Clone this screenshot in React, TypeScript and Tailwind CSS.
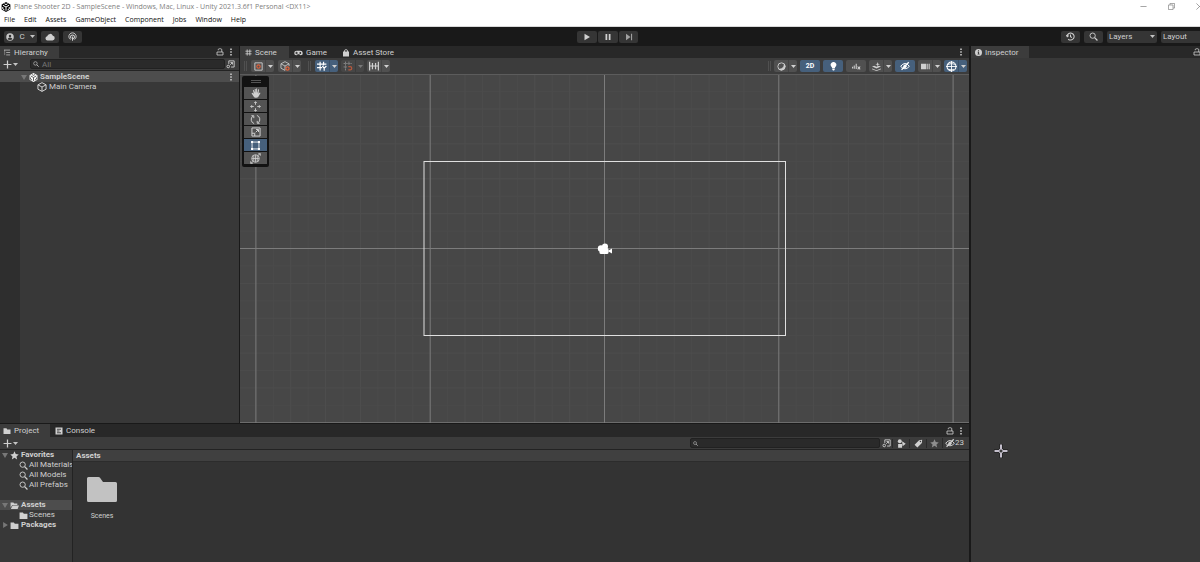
import { useState } from "react";
import type { ReactNode } from "react";

const menus = ["File", "Edit", "Assets", "GameObject", "Component", "Jobs", "Window", "Help"];

type IconProps = { className?: string; children: ReactNode };

// 16x16 line icon
function Line({ className = "size-[9px]", children }: IconProps) {
  return (
    <svg viewBox="0 0 16 16" fill="none" stroke="currentColor" strokeWidth="1.6" className={`shrink-0 ${className}`}>
      {children}
    </svg>
  );
}

// 16x16 filled icon
function Solid({ className = "size-[9px]", children }: IconProps) {
  return (
    <svg viewBox="0 0 16 16" fill="currentColor" className={`shrink-0 ${className}`}>
      {children}
    </svg>
  );
}

function Caret({ className = "text-[#c4c4c4]" }: { className?: string }) {
  return (
    <svg viewBox="0 0 10 6" fill="currentColor" className={`h-[3px] w-[5px] shrink-0 ${className}`}>
      <path d="M0 0h10L5 6z" />
    </svg>
  );
}

function Foldout() {
  return (
    <svg viewBox="0 0 10 8" fill="#777" className="h-[5px] w-[6px] shrink-0">
      <path d="M0 0h10L5 8z" />
    </svg>
  );
}

function Dots() {
  return (
    <Solid className="h-[8px] w-[8px]">
      <path d="M6.500 1h3v3h-3zM6.500 6.500h3v3h-3zM6.500 12h3v3h-3z" />
    </Solid>
  );
}

function Lock() {
  return (
    <Line className="size-[8px]">
      <path d="M2 8h12v6H2zM4.500 4.500V3.500q0-2 2-2h3q2 0 2 2V8" />
    </Line>
  );
}

function Search({ className = "size-[9px]" }: { className?: string }) {
  return (
    <Line className={className}>
      <circle cx="6.500" cy="6.500" r="4.700" />
      <path d="M10 10l5 5" strokeWidth="2.200" />
    </Line>
  );
}

function Picker() {
  return (
    <Line>
      <path d="M5 7V1.500h9.500v11H9" />
      <path d="M7.500 8.500l4-4M8 4.500h3.500V8" />
      <circle cx="4" cy="11.500" r="2.300" />
    </Line>
  );
}

function Folder({ className = "size-[9px]" }: { className?: string }) {
  return (
    <Solid className={className}>
      <path d="M1 2.500h6l1.500 2.500H15V14H1z" />
    </Solid>
  );
}

function FolderOpen() {
  return (
    <Solid>
      <path d="M1 2.500h5L7.500 4.500H13V7H4L1 12z" />
      <path d="M4.500 8H16l-2.500 6H1.500z" />
    </Solid>
  );
}

function Cube() {
  return (
    <Line className="size-[10px]">
      <path d="M8 1l6.500 3.500v7L8 15l-6.500-3.500v-7zM1.500 4.500L8 8l6.500-3.500M8 8v7" />
    </Line>
  );
}

function UnityLogo({ className, line }: { className: string; line: string }) {
  return (
    <svg viewBox="0 0 16 16" className={`shrink-0 ${className}`}>
      <path d="M8 0l7 4v8l-7 4-7-4V4z" fill="currentColor" />
      <path d="M8 8v6M8 8L3 5.200M8 8l5-2.800M5.500 2.800L8 4.200l2.500-1.400M2.800 8v3L5.500 12.500M13.200 8v3L10.500 12.500" stroke={line} strokeWidth="1.600" fill="none" />
    </svg>
  );
}

function EyeOff() {
  return (
    <Line className="size-[10px]">
      <path d="M1 8.500q7-9 14 0q-7 8-14 0z" />
      <circle cx="8" cy="8.500" r="2" fill="currentColor" />
      <path d="M2.500 14L14 2" strokeWidth="2" />
    </Line>
  );
}

function Star({ className = "size-[9px]" }: { className?: string }) {
  return (
    <Solid className={className}>
      <path d="M8 .5l2.200 5 5.300.5-4 3.600L12.700 15 8 12.200 3.300 15l1.200-5.400-4-3.600 5.300-.5z" />
    </Solid>
  );
}

function Plus() {
  return (
    <Line>
      <path d="M8 1v14M1 8h14" strokeWidth="2.200" />
    </Line>
  );
}

function GridIcon({ className = "size-[9px]" }: { className?: string }) {
  return (
    <Line className={className}>
      <path d="M5 1v14M11 1v14M1 5h14M1 11h14" strokeWidth="1.900" />
    </Line>
  );
}

function Grip() {
  return <span className="h-[10px] w-[3px] shrink-0 border-x border-[#505050]" />;
}

function MainButton({ label, className = "w-[19px]", children }: { label: string; className?: string; children: ReactNode }) {
  return (
    <button aria-label={label} className={`flex h-[12px] items-center justify-center rounded-xs bg-[#353535] ${className}`}>
      {children}
    </button>
  );
}

function SceneButton({ label, on, menu, dim, children }: { label: string; on?: boolean; menu?: boolean; dim?: boolean; children: ReactNode }) {
  return (
    <button
      aria-label={label}
      aria-pressed={on}
      className={`flex h-[12px] items-center rounded-xs ${on ? "bg-[#46607c] text-white" : dim ? "bg-[#464646] text-[#8a8a8a]" : "bg-[#505050]"} ${menu ? "w-[23px]" : "w-[20px]"}`}
    >
      <span className="flex flex-1 items-center justify-center">{children}</span>
      {menu && (
        <span className="flex h-full w-[9px] items-center justify-center border-l border-black/15">
          <Caret className={dim ? "text-[#777]" : "text-[#d0d0d0]"} />
        </span>
      )}
    </button>
  );
}

function Tab({ active, children }: { active?: boolean; children: ReactNode }) {
  return (
    <button role="tab" aria-selected={!!active} className={`flex h-full items-center gap-[3px] pt-px ${active ? "bg-[#3c3c3c]" : ""}`}>
      {children}
    </button>
  );
}

function TitleBar() {
  return (
    <header className="bg-white font-['Open_Sans',sans-serif] text-[7px]">
      <div className="flex h-[13px] items-center text-[#808080]">
        <UnityLogo className="ml-px size-[10px] text-black" line="#fff" />
        <h1 className="ml-[3px] whitespace-nowrap pt-px">
          Plane Shooter 2D - SampleScene - Windows, Mac, Linux - Unity 2021.3.6f1 Personal &lt;DX11&gt;
        </h1>
        <div className="ml-auto mr-[3px] flex">
          <button aria-label="Minimize" className="flex w-[28px] justify-center">
            <Line className="size-[7px]"><path d="M1 8h14" /></Line>
          </button>
          <button aria-label="Restore" className="flex w-[28px] justify-center">
            <Line className="size-[7px]"><path d="M1 4.500h10.500V15H1zM4.500 4V1H15v10.500h-3" /></Line>
          </button>
          <button aria-label="Close" className="flex w-[28px] justify-center">
            <Line className="size-[7px]"><path d="M1 1l14 14M15 1L1 15" /></Line>
          </button>
        </div>
      </div>
      <nav className="flex h-[14px] items-center gap-[9px] border-b border-[#d8d8d8] pl-1 pt-px text-[#111]">
        {menus.map((m) => (
          <button key={m}>{m}</button>
        ))}
      </nav>
    </header>
  );
}

function Dropdown({ label }: { label: string }) {
  return (
    <div className="relative flex items-center">
      <select aria-label={label} className="h-[12px] w-[50px] appearance-none rounded-xs bg-[#353535] pl-[2px] leading-none">
        <option>{label}</option>
      </select>
      <span className="pointer-events-none absolute right-[2px]">
        <Caret />
      </span>
    </div>
  );
}

function MainToolbar() {
  return (
    <div className="flex h-[19px] items-center bg-[#191919] pl-1 pr-[5px]">
      <div className="flex flex-1 gap-1">
        <MainButton label="Account" className="w-[33px] gap-[5px]">
          <svg viewBox="0 0 16 16" className="size-[8px]">
            <circle cx="8" cy="8" r="7.500" fill="#c8c8c8" />
            <circle cx="8" cy="5.800" r="2.500" fill="#353535" />
            <path d="M3 12.500q1-3.500 5-3.500t5 3.500q-5 3-10 0z" fill="#353535" />
          </svg>
          <span>C</span>
          <Caret />
        </MainButton>
        <MainButton label="Cloud" className="w-[18px]">
          <Solid className="size-[10px]">
            <path d="M4 13.500a3.500 3.500 0 01-.5-6.900A4.800 4.800 0 0112.600 6 3.800 3.800 0 0112 13.500z" />
          </Solid>
        </MainButton>
        <MainButton label="Version control">
          <Line>
            <path d="M4.500 13.500A6.500 6.500 0 1111.500 13.500" />
            <path d="M8 15.500V8M6 11.500A3.500 3.500 0 1110 11.500L8 13" strokeWidth="1.800" />
          </Line>
        </MainButton>
      </div>
      <div className="flex gap-px">
        <MainButton label="Play" className="w-[20px]">
          <Solid className="size-[8px]"><path d="M3 1.500l11 6.500-11 6.500z" /></Solid>
        </MainButton>
        <MainButton label="Pause" className="w-[20px]">
          <Solid className="size-[8px]"><path d="M3 2h3.500v12H3zM9.500 2H13v12H9.500z" /></Solid>
        </MainButton>
        <MainButton label="Step">
          <Solid className="size-[8px] text-[#a0a0a0]"><path d="M2 1.500L11 8l-9 6.500zM12 1.500h2.200v13H12z" /></Solid>
        </MainButton>
      </div>
      <div className="flex flex-1 justify-end gap-1">
        <MainButton label="Undo history">
          <Line>
            <path d="M2 8a6.200 6.200 0 111.800 4.500M.5 5.500L2.200 8.500 5 6.500M8 4.500V8.500l2.500 1.200" strokeWidth="1.800" />
          </Line>
        </MainButton>
        <MainButton label="Search"><Search /></MainButton>
        <Dropdown label="Layers" />
        <Dropdown label="Layout" />
      </div>
    </div>
  );
}

function Hierarchy() {
  return (
    <section className="flex w-[239px] shrink-0 flex-col bg-[#383838]">
      <div role="tablist" className="flex h-[12px] items-center bg-[#282828] pr-1">
        <Tab active>
          <Line className="ml-1 size-[7px]">
            <path d="M0 2.500h14M5 8h9M5 13.500h9" />
            <path d="M1.500 2v12" strokeWidth="1" />
          </Line>
          <span className="w-[45px] text-left">Hierarchy</span>
        </Tab>
        <div className="ml-auto flex gap-[3px]">
          <button aria-label="Lock"><Lock /></button>
          <button aria-label="Hierarchy menu"><Dots /></button>
        </div>
      </div>
      <div className="flex h-[13px] items-center border-b border-[#232323] bg-[#3c3c3c] pl-[3px] pr-1">
        <button aria-label="Create" className="flex items-center gap-px">
          <Plus />
          <Caret />
        </button>
        <label className="ml-[12px] flex h-[10px] flex-1 items-center gap-[3px] rounded-xs border border-[#212121] bg-[#2a2a2a] pl-0.5">
          <Search className="size-[6px]" />
          <input type="search" aria-label="Search hierarchy" placeholder="All" className="w-full min-w-0 leading-none outline-none placeholder:text-[#777]" />
        </label>
        <button aria-label="Pick type" className="ml-px"><Picker /></button>
      </div>
      <div className="flex flex-1">
        <div className="w-[20px] shrink-0 bg-[#2e2e2e]" />
        <ul className="flex-1">
          <li className="-ml-5 flex h-[11px] items-center bg-[#4d4d4d] pl-[21px] pr-1 pt-px font-bold">
            <Foldout />
            <UnityLogo className="ml-[2px] size-[9px] text-white" line="#4d4d4d" />
            <span className="ml-[2px]">SampleScene</span>
            <button aria-label="Scene menu" className="ml-auto"><Dots /></button>
          </li>
          <li className="flex h-[10px] items-center gap-[2px] pl-[17px]">
            <Cube />
            <span>Main Camera</span>
          </li>
        </ul>
      </div>
    </section>
  );
}

const tools = [
  {
    name: "Hand",
    icon: (
      <Solid className="size-[10px]">
        <path d="M4.500 9L3 3.500l1.500-.5L6 7V1.500h1.600V7h.6V.8h1.600V7h.6l1-5 1.500.3L12 9l2-2 1.200 1L11.500 14.500Q10.500 15.500 8.500 15.500H7Q5.500 15.500 4.500 14L.8 8.500 2.200 7.500z" />
      </Solid>
    ),
  },
  {
    name: "Move",
    icon: (
      <Line className="size-[11px]">
        <path d="M8 1v4.500M8 10.500V15M1 8h4.500M10.500 8H15M6 3l2-2 2 2M6 13l2 2 2-2M3 6L1 8l2 2M13 6l2 2-2 2" strokeWidth="1.300" />
      </Line>
    ),
  },
  {
    name: "Rotate",
    icon: (
      <Line className="size-[11px]">
        <path d="M6 14A6.300 6.300 0 014 3.200M2 2.500h3.500V6M10 2a6.300 6.300 0 012 10.800M14 13.500h-3.500V10" strokeWidth="1.400" />
      </Line>
    ),
  },
  {
    name: "Scale",
    icon: (
      <Line className="size-[10px]">
        <path d="M1.500 1.500h13v13h-13zM1.500 10H6v4.500M7.500 8.500l4-4M8 4h4v4" strokeWidth="1.600" />
      </Line>
    ),
  },
  {
    name: "Rect",
    icon: (
      <Line className="size-[11px]">
        <path d="M3 3h10v10H3z" strokeWidth="1.200" />
        <path d="M1.500 1.500h3v3h-3zM11.500 1.500h3v3h-3zM1.500 11.500h3v3h-3zM11.500 11.500h3v3h-3z" fill="currentColor" stroke="none" />
      </Line>
    ),
  },
  {
    name: "Transform",
    icon: (
      <Line className="size-[11px]">
        <circle cx="8" cy="8" r="5.500" strokeWidth="1.300" />
        <path d="M8 3v10M3 8h10M5.500 4v8M10.500 4v8M12 3l3-2M4 13l-3 2M1 12v3h3M12 1h3v3" strokeWidth="1.200" />
      </Line>
    ),
  },
];

const CELL = 17.43;
const steps = Array.from({ length: 81 }, (_, i) => i - 40);
const minor = steps.filter((n) => n % 10 !== 0);
const major = steps.filter((n) => n % 10 === 0);

function GridLines({ at, stroke }: { at: number[]; stroke: string }) {
  return (
    <g stroke={stroke}>
      {at.map((n) => (
        <g key={n}>
          <line x1={n * CELL} x2={n * CELL} y1="-700" y2="700" />
          <line y1={n * CELL} y2={n * CELL} x1="-700" x2="700" />
        </g>
      ))}
    </g>
  );
}

function Viewport() {
  const [tool, setTool] = useState("Rect");

  return (
    <div className="relative min-h-0 flex-1 overflow-hidden border-t border-[#5c5c5c] bg-[#474747]">
      <svg viewBox="-364.500 -173.500 729 348" preserveAspectRatio="xMidYMid slice" className="absolute inset-0 size-full">
        <GridLines at={minor.filter((n) => n % 2 !== 0)} stroke="#4b4b4b" />
        <GridLines at={minor.filter((n) => n % 2 === 0)} stroke="#4e4e4e" />
        <GridLines at={major} stroke="#7c7c7c" />
        <rect x="-180.500" y="-87" width="361.500" height="174" fill="none" stroke="#e0e0e0" />
        <g fill="#fff">
          <circle cx="-3.500" cy="0" r="3.200" />
          <circle cx=".5" cy="-2" r="3" />
          <rect x="-5" y="-.5" width="9" height="6" rx="1.500" />
          <path d="M3 2.500l4.500-2.500v5z" />
        </g>
      </svg>
      <div className="absolute left-[2px] top-px flex w-[27px] flex-col gap-px rounded-xs bg-[#121212] px-[2px] pb-[3px]">
        <div className="flex h-[10px] items-center justify-center">
          <span className="h-[3px] w-[10px] border-y border-[#555]" />
        </div>
        {tools.map((t) => (
          <button
            key={t.name}
            aria-label={t.name}
            aria-pressed={tool === t.name}
            onClick={() => setTool(t.name)}
            className={`flex h-[12px] items-center justify-center ${tool === t.name ? "bg-[#46607c] text-white" : "bg-[#535353]"}`}
          >
            {t.icon}
          </button>
        ))}
      </div>
    </div>
  );
}

function SceneToolbar() {
  return (
    <div className="flex h-[16px] items-center bg-[#3c3c3c] pl-1 pr-[2px]">
      <Grip />
      <div className="ml-1 flex gap-[4px]">
        <SceneButton label="Pivot" menu>
          <Line>
            <path d="M1.500 1.500h13v13h-13z" />
            <circle cx="8" cy="8" r="3" stroke="#e0623c" strokeWidth="2" />
          </Line>
        </SceneButton>
        <SceneButton label="Handle space" menu>
          <Line className="size-[10px]">
            <path d="M8 15l-6.500-3.500v-7L8 1l6.500 3.500V8M1.500 4.500L8 8l6.500-3.500M8 8v7" strokeWidth="1.300" />
            <circle cx="12" cy="12" r="2.500" stroke="#e0623c" strokeWidth="2" />
          </Line>
        </SceneButton>
      </div>
      <span className="ml-[7px] flex"><Grip /></span>
      <div className="ml-[4px] flex gap-[3px]">
        <SceneButton label="Grid axis" on menu>
          <Line className="size-[10px]">
            <path d="M5 1v14M10.500 1v6M0 5h15M0 10.500h8M8.500 8l3 3.500L15 8M11.500 11v4.500" strokeWidth="1.900" />
          </Line>
        </SceneButton>
        <SceneButton label="Grid snapping" dim menu>
          <Line className="size-[10px]">
            <path d="M4 1v14M9.500 1v5M1 4h13M1 9.500h6" strokeDasharray="2 1" />
            <path d="M8.500 9h3a2.500 2.500 0 010 5h-3" stroke="#b5573c" strokeWidth="2" />
          </Line>
        </SceneButton>
        <SceneButton label="Snap increment" menu>
          <Line className="size-[10px]">
            <path d="M1 1v14M15 1v14M5.500 3v10M10.500 3v10M1 8h14" strokeWidth="1.900" />
          </Line>
        </SceneButton>
      </div>
      <div className="ml-auto flex items-center gap-[3px]">
        <Grip />
        <SceneButton label="Draw mode" menu>
          <Line>
            <circle cx="8" cy="8" r="6.500" />
            <path d="M13 4a6.500 6.500 0 01-9 9q9-1 9-9z" fill="currentColor" />
          </Line>
        </SceneButton>
        <SceneButton label="2D" on><span className="text-[7px] font-bold">2D</span></SceneButton>
        <SceneButton label="Lighting" on>
          <Solid><path d="M5.500 11Q5.500 9.500 4 8.200a5 5 0 118 0Q10.500 9.500 10.500 11zM5.800 12h4.400v1.500L9 15H7l-1.200-1.500z" /></Solid>
        </SceneButton>
        <SceneButton label="Audio">
          <Line>
            <path d="M1 8.500v3M4 6v6M7.500 3v9.500M10 8l4.500 5M14.500 8L10 13" strokeWidth="1.900" />
          </Line>
        </SceneButton>
        <SceneButton label="Effects" menu>
          <Solid>
            <path d="M0 8l4-1.500 4 2 4-2L16 8l-8 3.500zM0 11.500l8 3 8-3V13l-8 3-8-3zM10 0l1 3 3 1-3 1-1 3-1-3-3-1 3-1z" />
          </Solid>
        </SceneButton>
        <SceneButton label="Scene visibility" on><EyeOff /></SceneButton>
        <SceneButton label="Camera" menu>
          <Solid><path d="M0 3h9v10H0zM10 3h2v10h-2zM13.500 3h2v10h-2z" /></Solid>
        </SceneButton>
        <SceneButton label="Gizmos" on menu>
          <Line className="size-[11px]">
            <circle cx="8" cy="8" r="6.500" />
            <path d="M8 0v16M0 8h16M2.500 5q5.500-2.500 11 0M4 12q4 2 8 0" strokeWidth="1.300" />
          </Line>
        </SceneButton>
      </div>
    </div>
  );
}

function Scene() {
  return (
    <section className="flex min-w-0 flex-1 flex-col">
      <div role="tablist" className="flex h-[12px] items-center bg-[#282828] pr-1">
        <Tab active>
          <GridIcon className="ml-[5px] size-[7px]" />
          <span className="w-[34px] text-left">Scene</span>
        </Tab>
        <Tab>
          <svg viewBox="0 0 20 12" className="ml-[5px] h-[6px] w-[9px]" fill="currentColor">
            <path fillRule="evenodd" d="M6 1h8q5 0 5.500 5T15 11q-2 0-3-2H8q-1 2-3 2Q.5 11 .5 6T6 1zM5 3v2H3v2h2v2h1.500V7h2V5h-2V3zM14 4a2 2 0 100 4 2 2 0 000-4z" />
          </svg>
          <span className="w-[36px] text-left">Game</span>
        </Tab>
        <Tab>
          <Solid className="size-[8px]">
            <path d="M2 5h12v10H2z" />
            <path d="M5 6V3q0-1.500 3-1.500T11 3v3" fill="none" stroke="currentColor" strokeWidth="1.800" />
          </Solid>
          <span>Asset Store</span>
        </Tab>
        <button aria-label="Scene tab menu" className="ml-auto"><Dots /></button>
      </div>
      <SceneToolbar />
      <Viewport />
    </section>
  );
}

const favorites = ["All Materials", "All Models", "All Prefabs"];

function Project() {
  return (
    <section className="flex h-[138px] shrink-0 flex-col bg-[#333]">
      <div role="tablist" className="flex h-[13px] items-center bg-[#282828] pr-1">
        <Tab active>
          <Folder className="ml-[3px] size-[8px]" />
          <span className="w-[36px] text-left">Project</span>
        </Tab>
        <Tab>
          <svg viewBox="0 0 16 16" className="ml-[5px] size-[8px]">
            <path d="M1 1h14v14H1z" fill="currentColor" />
            <path d="M4 4.500h8M4 8h5M4 11.500h8" stroke="#282828" strokeWidth="1.600" />
          </svg>
          <span>Console</span>
        </Tab>
        <div className="ml-auto flex gap-[3px]">
          <button aria-label="Lock"><Lock /></button>
          <button aria-label="Project menu"><Dots /></button>
        </div>
      </div>
      <div className="flex h-[13px] items-center border-b border-[#232323] bg-[#3c3c3c] pl-[3px] pr-[5px]">
        <button aria-label="Create asset" className="flex items-center gap-px">
          <Plus />
          <Caret />
        </button>
        <label className="ml-auto flex h-[10px] w-[190px] items-center gap-[2px] rounded-xs border border-[#212121] bg-[#2a2a2a] pl-0.5">
          <Search className="size-[5px]" />
          <input type="search" aria-label="Search project" className="w-full min-w-0 leading-none outline-none" />
        </label>
        <button aria-label="Search by window" className="flex w-[12px] justify-center"><Picker /></button>
        <button aria-label="Search by type" className="flex w-[17px] justify-center border-l border-[#2a2a2a]">
          <Solid>
            <circle cx="5" cy="4" r="3.500" />
            <path d="M2 9h7v6.500H2zM9 4l6.500 4.500L10 13z" />
          </Solid>
        </button>
        <button aria-label="Search by label" className="flex w-[17px] justify-center border-l border-[#2a2a2a]">
          <Solid>
            <path fillRule="evenodd" d="M9 2l5.500-.5L14 7l-8 8-5-5zM11.500 3a1.300 1.300 0 100 2.600 1.300 1.300 0 000-2.600z" />
          </Solid>
        </button>
        <button aria-label="Save search" className="flex w-[16px] justify-center border-l border-[#2a2a2a] text-[#8e8e8e]"><Star /></button>
        <button aria-label="Hidden packages" className="flex items-center border-l border-[#2a2a2a] pl-[2px]">
          <EyeOff />
          <span>23</span>
        </button>
      </div>
      <div className="flex min-h-0 flex-1">
        <ul className="w-[73px] shrink-0 overflow-hidden whitespace-nowrap border-r border-[#232323] bg-[#383838]">
          <li>
            <div className="flex h-[10px] items-center gap-[2px] pl-[2px] font-bold">
              <Foldout />
              <Star />
              <span>Favorites</span>
            </div>
            <ul>
              {favorites.map((f) => (
                <li key={f} className="flex h-[10px] items-center gap-px pl-[19px]">
                  <Search />
                  <span>{f}</span>
                </li>
              ))}
            </ul>
          </li>
          <li className="mt-[10px]">
            <div className="flex h-[10px] items-center gap-[2px] bg-[#4d4d4d] pl-[2px] font-bold">
              <Foldout />
              <FolderOpen />
              <span>Assets</span>
            </div>
            <div className="flex h-[10px] items-center gap-px pl-[19px]">
              <Folder />
              <span>Scenes</span>
            </div>
          </li>
          <li className="flex h-[10px] items-center gap-[2px] pl-[3px] font-bold">
            <svg viewBox="0 0 8 10" fill="#777" className="h-[6px] w-[5px]">
              <path d="M0 0v10l8-5z" />
            </svg>
            <Folder />
            <span>Packages</span>
          </li>
        </ul>
        <div className="flex-1">
          <div className="flex h-[12px] items-center border-b border-[#2c2c2c] bg-[#404040] pl-[3px] font-bold">Assets</div>
          <div className="flex px-[11px] py-[14px]">
            <button className="flex w-[36px] flex-col items-center gap-[7px]">
              <svg viewBox="0 0 32 28" className="h-[28px] w-[32px]">
                <path d="M2.500 1h10q1 0 1.500.8L17 6h12.500Q31 6 31 7.500v17q0 1.500-1.500 1.500h-27Q1 26 1 24.500v-22Q1 1 2.500 1z" fill="#c2c2c2" />
              </svg>
              <span className="text-[7px]">Scenes</span>
            </button>
          </div>
        </div>
      </div>
    </section>
  );
}

function Inspector() {
  return (
    <section className="relative w-[245px] shrink-0 bg-[#383838]">
      <div role="tablist" className="flex h-[12px] items-center bg-[#282828] pr-1">
        <Tab active>
          <Solid className="ml-1 size-[7px]">
            <path fillRule="evenodd" d="M8 0a8 8 0 100 16A8 8 0 008 0zM6.800 3h2.400v2.400H6.800zM6 6.500h3.300V11h1.200v1.800H5.800V11h1.200V8.200H6z" />
          </Solid>
          <span className="w-[44px] text-left">Inspector</span>
        </Tab>
        <div className="ml-auto flex gap-[3px]">
          <button aria-label="Lock"><Lock /></button>
          <button aria-label="Inspector menu"><Dots /></button>
        </div>
      </div>
      {/* mouse pointer */}
      <svg viewBox="0 0 14 14" className="absolute left-[23px] top-[398px] size-[14px]">
        <path d="M7 0v5M7 9v5M0 7h5M9 7h5" stroke="#222" strokeWidth="3.400" />
        <path d="M7 .5V5M7 9v4.500M.5 7H5M9 7h4.500" stroke="#c4bfcc" strokeWidth="2" />
        <circle cx="7" cy="7" r="2" fill="none" stroke="#c4bfcc" />
      </svg>
    </section>
  );
}

export default function App() {
  return (
    <div className="h-screen overflow-hidden bg-[#191919] font-['Roboto',sans-serif] text-[8px] leading-[10px] text-[#d0d0d0]">
      {/* the window hangs a little over the right edge of the screen */}
      <div className="flex h-full w-[calc(100%+16px)] flex-col">
        <TitleBar />
        <MainToolbar />
        <main className="flex min-h-0 flex-1 gap-[2px]">
          <div className="flex min-w-0 flex-1 flex-col gap-px">
            <div className="flex min-h-0 flex-1 gap-px">
              <Hierarchy />
              <Scene />
            </div>
            <Project />
          </div>
          <Inspector />
        </main>
      </div>
    </div>
  );
}
